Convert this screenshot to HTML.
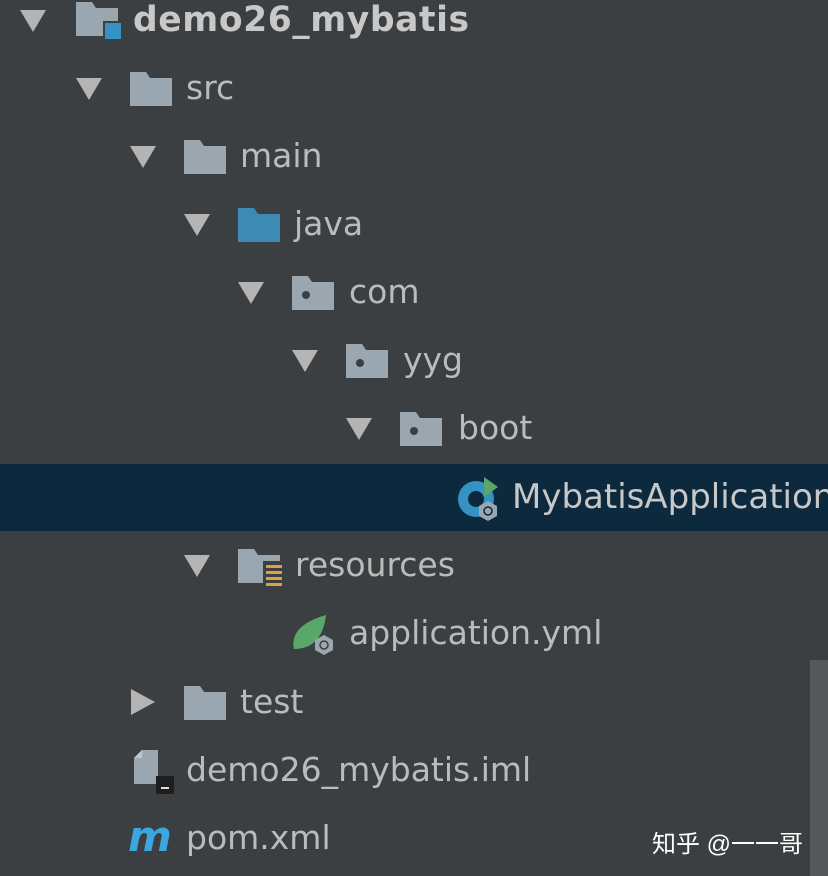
<!DOCTYPE html>
<html><head><meta charset="utf-8"><style>
body{margin:0;width:828px;height:876px;background:#3c3f41;overflow:hidden;position:relative;font-family:"DejaVu Sans","Liberation Sans",sans-serif;}
.r{position:absolute;left:0;width:828px;height:68px;}
.t{position:absolute;top:0;line-height:68px;font-size:33px;color:#bbbbbb;white-space:nowrap;}
.tri{position:absolute;width:0;height:0;border-left:13px solid transparent;border-right:13px solid transparent;border-top:22px solid #b4b4b4;top:24px;}
.tr{position:absolute;width:0;height:0;border-top:13px solid transparent;border-bottom:13px solid transparent;border-left:24px solid #b4b4b4;top:21px;}
svg{position:absolute;}
</style></head><body>
<div style="position:absolute;left:0;top:464px;width:828px;height:67px;background:#0d293e"></div>
<div style="position:absolute;left:810px;top:660px;width:18px;height:216px;background:#55585a"></div>

<div class="r" style="top:-14px"><div class="tri" style="left:20px"></div>
<svg style="left:76px;top:16px" width="48" height="40"><path d="M0 0h16l4 6h22v28H0z" fill="#9aa7b0"/><rect x="28" y="20" width="18" height="18" fill="#3592c4" stroke="#3c3f41" stroke-width="2"/></svg>
<div class="t" style="left:133px;font-weight:bold;color:#c8c8c8;font-size:34.5px;letter-spacing:0.6px">demo26_mybatis</div></div>

<div class="r" style="top:54px"><div class="tri" style="left:76px"></div>
<svg style="left:130px;top:18px" width="44" height="34"><path d="M0 0h16l4 6h22v28H0z" fill="#9aa7b0"/></svg>
<div class="t" style="left:186px">src</div></div>

<div class="r" style="top:122px"><div class="tri" style="left:130px"></div>
<svg style="left:184px;top:18px" width="44" height="34"><path d="M0 0h16l4 6h22v28H0z" fill="#9aa7b0"/></svg>
<div class="t" style="left:240px">main</div></div>

<div class="r" style="top:190px"><div class="tri" style="left:184px"></div>
<svg style="left:238px;top:18px" width="44" height="34"><path d="M0 0h16l4 6h22v28H0z" fill="#3d8ab5"/></svg>
<div class="t" style="left:294px">java</div></div>

<div class="r" style="top:258px"><div class="tri" style="left:238px"></div>
<svg style="left:292px;top:18px" width="44" height="34"><path d="M0 0h16l4 6h22v28H0z" fill="#9aa7b0"/><circle cx="14" cy="19" r="4" fill="#3c3f41"/></svg>
<div class="t" style="left:349px">com</div></div>

<div class="r" style="top:326px"><div class="tri" style="left:292px"></div>
<svg style="left:346px;top:18px" width="44" height="34"><path d="M0 0h16l4 6h22v28H0z" fill="#9aa7b0"/><circle cx="14" cy="19" r="4" fill="#3c3f41"/></svg>
<div class="t" style="left:403px">yyg</div></div>

<div class="r" style="top:394px"><div class="tri" style="left:346px"></div>
<svg style="left:400px;top:18px" width="44" height="34"><path d="M0 0h16l4 6h22v28H0z" fill="#9aa7b0"/><circle cx="14" cy="19" r="4" fill="#3c3f41"/></svg>
<div class="t" style="left:458px">boot</div></div>

<div class="r" style="top:463px">
<svg style="left:454px;top:12px" width="52" height="48"><circle cx="22" cy="24" r="18" fill="#3592c4"/><circle cx="22" cy="24" r="8" fill="#0d293e"/><path d="M30 2l14 10-14 10z" fill="#59a869"/><path d="M34 26l9 5v10l-9 5-9-5V31z" fill="#9aa7b0"/><circle cx="34" cy="36" r="4" fill="none" stroke="#0d293e" stroke-width="1.5"/></svg>
<div class="t" style="left:512px;color:#c8c8c8;font-size:34px">MybatisApplication</div></div>

<div class="r" style="top:531px"><div class="tri" style="left:184px"></div>
<svg style="left:238px;top:18px" width="50" height="40"><path d="M0 0h16l4 6h22v28H0z" fill="#9aa7b0"/><rect x="25" y="12" width="24" height="26" fill="#3c3f41"/><g fill="#d9a343"><rect x="28" y="16" width="16" height="3"/><rect x="28" y="22" width="16" height="3"/><rect x="28" y="28" width="16" height="3"/><rect x="28" y="34" width="16" height="3"/></g></svg>
<div class="t" style="left:295px">resources</div></div>

<div class="r" style="top:599px">
<svg style="left:290px;top:14px" width="50" height="46"><path d="M4 36C0 20 14 8 36 2c-2 18-10 34-32 34z" fill="#59a869"/><path d="M34 22l9 5v10l-9 5-9-5V27z" fill="#9aa7b0"/><circle cx="34" cy="32" r="4" fill="none" stroke="#3c3f41" stroke-width="1.5"/></svg>
<div class="t" style="left:349px">application.yml</div></div>

<div class="r" style="top:668px"><div class="tr" style="left:131px"></div>
<svg style="left:184px;top:18px" width="44" height="34"><path d="M0 0h16l4 6h22v28H0z" fill="#9aa7b0"/></svg>
<div class="t" style="left:240px">test</div></div>

<div class="r" style="top:736px">
<svg style="left:134px;top:14px" width="44" height="50"><path d="M8 0h16v34H0V8z" fill="#9aa7b0"/><path d="M0 8h8V0z" fill="#c0c8ce"/><rect x="22" y="26" width="18" height="18" fill="#1e1e1e"/><rect x="27" y="37" width="8" height="2" fill="#ddd"/></svg>
<div class="t" style="left:186px">demo26_mybatis.iml</div></div>

<div class="r" style="top:804px">
<div class="t" style="left:128px;color:#3aa8de;font-style:italic;font-weight:bold;font-size:42px;line-height:66px">m</div>
<div class="t" style="left:186px">pom.xml</div></div>

<div style="position:absolute;left:652px;top:824px;font-size:24px;color:#ffffff;font-family:'Liberation Sans','Noto Sans CJK SC',sans-serif;">知乎 @一一哥</div>
</body></html>
